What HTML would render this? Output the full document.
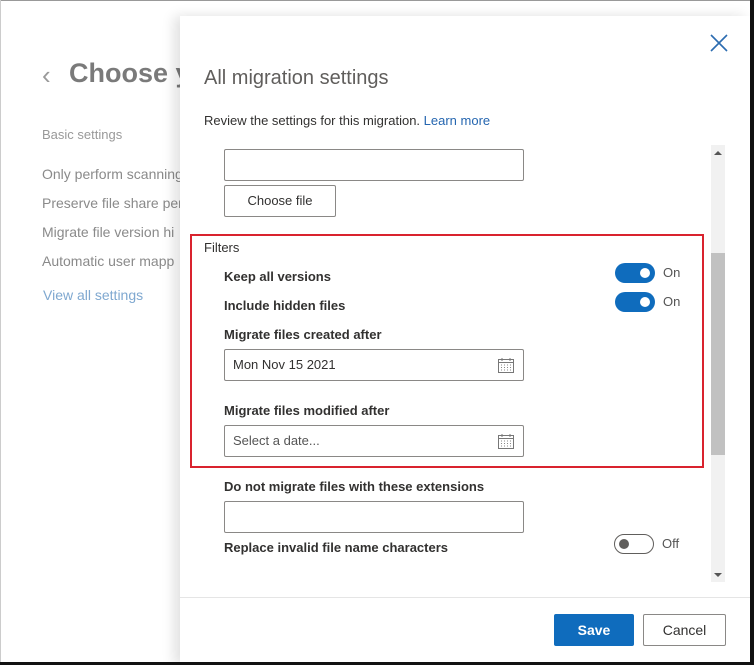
<!DOCTYPE html>
<html><head><style>
*{margin:0;padding:0;box-sizing:border-box}
html,body{background:#fff}
body{width:754px;height:665px;position:relative;overflow:hidden;font-family:"Liberation Sans",sans-serif;color:#323130}
.a{position:absolute;white-space:nowrap}
.l{color:#8a8a8a;font-size:14px}
.b{font-weight:bold;font-size:13px;color:#323130}
.inp{position:absolute;border:1px solid #8a8886;border-radius:2px;background:#fff;font-size:13px;padding-left:8px;line-height:30px}
.tg{position:absolute;width:40px;height:20px;border-radius:10px;background:#0f6cbd}
.tg i{position:absolute;right:5px;top:5px;width:10px;height:10px;border-radius:50%;background:#fff}
.cal{position:absolute;right:9px;top:8px}
</style></head><body>
<div class="a" style="left:0;top:0;width:754px;height:1px;background:#999"></div>
<div class="a" style="left:0;top:0;width:1px;height:665px;background:#ccc"></div>
<div class="a" style="left:42px;top:60px;font-size:26px;color:#9a9a9a">&lsaquo;</div>
<div class="a" style="left:69px;top:58px;font-size:27px;font-weight:bold;color:#7a7a7a">Choose y</div>
<div class="a l" style="left:42px;top:127px;font-size:13px;color:#999">Basic settings</div>
<div class="a l" style="left:42px;top:166px">Only perform scanning</div>
<div class="a l" style="left:42px;top:195px">Preserve file share per</div>
<div class="a l" style="left:42px;top:224px">Migrate file version hi</div>
<div class="a l" style="left:42px;top:253px">Automatic user mapp</div>
<div class="a l" style="left:43px;top:287px;color:#7fa8d0">View all settings</div>

<div class="a" style="left:180px;top:16px;width:570px;height:649px;background:#fff;box-shadow:-6px 0 12px rgba(0,0,0,.12);overflow:hidden">
 <svg class="a" style="left:530px;top:18px" width="18" height="18" viewBox="0 0 18 18"><path d="M1 1L17 17M17 1L1 17" stroke="#2b6cb0" stroke-width="1.6" fill="none"/></svg>
 <div class="a" style="left:24px;top:51px;font-size:20px;color:#605e5c;font-weight:300">All migration settings</div>
 <div class="a" style="left:24px;top:97px;font-size:13px">Review the settings for this migration. <span style="color:#2566b0">Learn more</span></div>
 <div class="inp" style="left:44px;top:133px;width:300px;height:32px"></div>
 <div class="a" style="left:44px;top:169px;width:112px;height:32px;border:1px solid #8a8886;border-radius:2px;font-size:13px;text-align:center;line-height:30px">Choose file</div>
 <div class="a" style="left:10px;top:218px;width:514px;height:234px;border:2px solid #d9232e"></div>
 <div class="a" style="left:24px;top:224px;font-size:13px">Filters</div>
 <div class="a b" style="left:44px;top:253px">Keep all versions</div>
 <div class="tg" style="left:435px;top:247px"><i></i></div><div class="a" style="left:483px;top:249px;font-size:13px;color:#555">On</div>
 <div class="a b" style="left:44px;top:282px">Include hidden files</div>
 <div class="tg" style="left:435px;top:276px"><i></i></div><div class="a" style="left:483px;top:278px;font-size:13px;color:#555">On</div>
 <div class="a b" style="left:44px;top:311px">Migrate files created after</div>
 <div class="inp" style="left:44px;top:333px;width:300px;height:32px">Mon Nov 15 2021<svg class="cal" width="16" height="15" viewBox="0 0 16 15"><rect x="0.5" y="1.5" width="15" height="13" fill="none" stroke="#777"/><path d="M0.5 4.5H15.5" stroke="#777"/><path d="M4 0V3M12 0V3" stroke="#777"/><path d="M3 7h1M6 7h1M9 7h1M12 7h1M3 9.5h1M6 9.5h1M9 9.5h1M12 9.5h1M3 12h1M6 12h1M9 12h1M12 12h1" stroke="#888"/></svg></div>
 <div class="a b" style="left:44px;top:387px">Migrate files modified after</div>
 <div class="inp" style="left:44px;top:409px;width:300px;height:32px;color:#555">Select a date...<svg class="cal" width="16" height="15" viewBox="0 0 16 15"><rect x="0.5" y="1.5" width="15" height="13" fill="none" stroke="#777"/><path d="M0.5 4.5H15.5" stroke="#777"/><path d="M4 0V3M12 0V3" stroke="#777"/><path d="M3 7h1M6 7h1M9 7h1M12 7h1M3 9.5h1M6 9.5h1M9 9.5h1M12 9.5h1M3 12h1M6 12h1M9 12h1M12 12h1" stroke="#888"/></svg></div>
 <div class="a b" style="left:44px;top:463px">Do not migrate files with these extensions</div>
 <div class="inp" style="left:44px;top:485px;width:300px;height:32px"></div>
 <div class="a b" style="left:44px;top:524px">Replace invalid file name characters</div>
 <div class="a" style="left:434px;top:518px;width:40px;height:20px;border:1px solid #605e5c;border-radius:10px"><i style="position:absolute;left:4px;top:4px;width:10px;height:10px;border-radius:50%;background:#605e5c"></i></div>
 <div class="a" style="left:482px;top:520px;font-size:13px;color:#555">Off</div>
 <div class="a" style="left:531px;top:129px;width:14px;height:437px;background:#f1f1f1"></div>
 <div class="a" style="left:531px;top:237px;width:14px;height:202px;background:#c1c1c1"></div>
 <div class="a" style="left:534px;top:135px;border:4px solid transparent;border-bottom-color:#555;border-top:0"></div>
 <div class="a" style="left:534px;top:557px;border:4px solid transparent;border-top-color:#555;border-bottom:0"></div>
 <div class="a" style="left:0;top:581px;width:570px;height:1px;background:#e5e5e5"></div>
 <div class="a" style="left:374px;top:598px;width:80px;height:32px;background:#0f6cbd;border-radius:2px;color:#fff;font-weight:bold;font-size:14px;text-align:center;line-height:32px">Save</div>
 <div class="a" style="left:463px;top:598px;width:83px;height:32px;border:1px solid #8a8886;border-radius:2px;font-size:14px;text-align:center;line-height:30px">Cancel</div>
</div>
<div class="a" style="left:750px;top:0;width:4px;height:665px;background:#111"></div>
<div class="a" style="left:0;top:662px;width:754px;height:3px;background:#111"></div>
</body></html>
